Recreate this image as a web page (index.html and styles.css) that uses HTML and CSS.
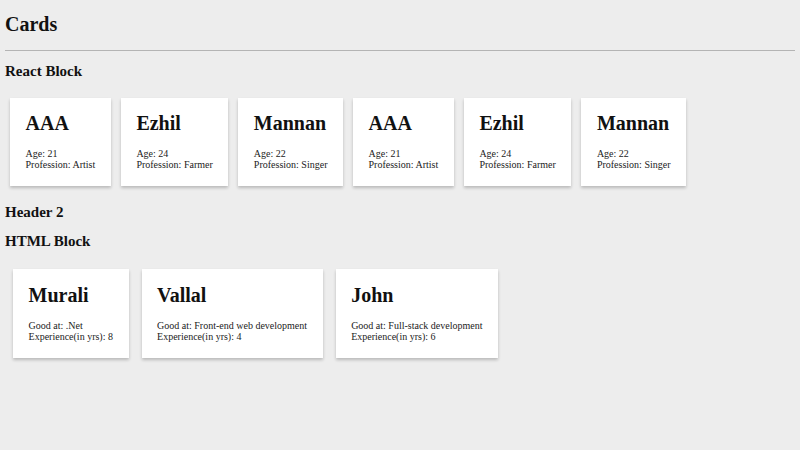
FILE: index.html
```html
<!DOCTYPE html>
<html lang="en">
<head>
    <meta charset="UTF-8">
    <meta name="viewport" content="width=device-width, initial-scale=1.0">
    <title>Cards</title>
    <link rel="stylesheet" href="styles.css">
</head>
<body>
    <h1>Cards</h1>
    <hr>

    <!-- React Block -->
    <h2>React Block</h2>
    <div class="card-row">
        <div class="card">
            <h1>AAA</h1>
            <p>Age: 21<br>Profession: Artist</p>
        </div>
        <div class="card">
            <h1>Ezhil</h1>
            <p>Age: 24<br>Profession: Farmer</p>
        </div>
        <div class="card">
            <h1>Mannan</h1>
            <p>Age: 22<br>Profession: Singer</p>
        </div>
        <div class="card">
            <h1>AAA</h1>
            <p>Age: 21<br>Profession: Artist</p>
        </div>
        <div class="card">
            <h1>Ezhil</h1>
            <p>Age: 24<br>Profession: Farmer</p>
        </div>
        <div class="card">
            <h1>Mannan</h1>
            <p>Age: 22<br>Profession: Singer</p>
        </div>
    </div>

    <h2>Header 2</h2>

    <!-- HTML Block -->
    <h2>HTML Block</h2>
    <div class="card-row html-row">
        <div class="card">
            <h1>Murali</h1>
            <p>Good at: .Net<br>Experience(in yrs): 8</p>
        </div>
        <div class="card">
            <h1>Vallal</h1>
            <p>Good at: Front-end web development<br>Experience(in yrs): 4</p>
        </div>
        <div class="card">
            <h1>John</h1>
            <p>Good at: Full-stack development<br>Experience(in yrs): 6</p>
        </div>
    </div>
</body>
</html>
```

FILE: styles.css
```css
body {
    font-family: "Liberation Serif", "Times New Roman", serif;
    background: #ededed;
    color: #111;
    margin: 0;
    padding: 0 5px;
    font-size: 10px;
}

h1 {
    font-size: 20px;
    margin: 13.4px 0;
}

h2 {
    font-size: 15px;
    margin: 12.45px 0;
}

hr {
    border: none;
    border-top: 1px solid #b4b4b4;
    margin: 5px 0;
}

p {
    margin: 10px 0;
    color: #222;
}

.card-row {
    display: flex;
    align-items: flex-start;
}

.card {
    flex: none;
    background: #fff;
    margin: 5px;
    padding: 1px 15.55px 6px;
    box-shadow: 0 2px 3px rgba(0, 0, 0, 0.22);
}

.html-row {
    padding: 1.5px 0 0 3px;
    gap: 3px;
}
```
